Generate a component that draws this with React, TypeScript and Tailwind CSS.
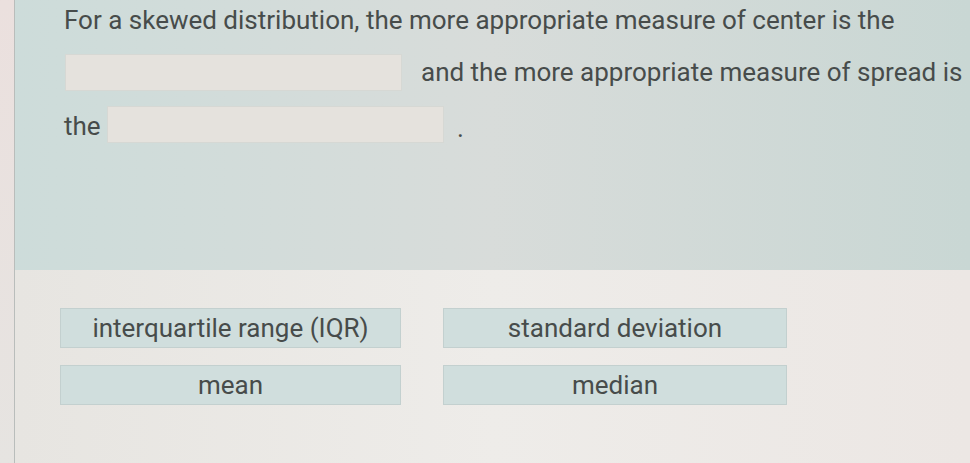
import React from "react";

const choices = [
  "interquartile range (IQR)",
  "standard deviation",
  "mean",
  "median",
];

function Blank({ className = "" }: { className?: string }) {
  return (
    <div
      className={`h-[37px] w-[337px] border border-[#d6d8d4] bg-[#e5e2dd] ${className}`}
    />
  );
}

export default function App() {
  return (
    <div
      className="flex h-[463px] w-[970px] overflow-hidden text-[#474c4b]"
      style={{ fontFamily: "Roboto, 'Liberation Sans', sans-serif" }}
    >
      {/* left margin of the page */}
      <div className="w-[15px] shrink-0 border-r border-[#b9bdbb] bg-gradient-to-b from-[#ebe0de] to-[#e6e4e1]" />

      <div className="flex flex-1 flex-col">
        {/* question */}
        <div className="h-[270px] bg-gradient-to-r from-[#cddcda] via-[#d8dcda] to-[#c9d7d4] pl-[49px] pt-[1px]">
          <div className="flex h-[38px] items-center whitespace-nowrap text-[26px]">
            For a skewed distribution, the more appropriate measure of center is the
          </div>
          <div className="mt-[13px] flex items-center gap-[19px] pl-[1px]">
            <Blank />
            <span className="whitespace-nowrap pt-[1px] text-[26px]">
              and the more appropriate measure of spread is
            </span>
          </div>
          <div className="mt-[9px] flex items-center">
            <span className="w-[43px] pt-[4px] text-[26px]">the</span>
            <Blank />
            <span className="ml-[13px] pt-[8px] text-[26px]">.</span>
          </div>
        </div>

        {/* answer bank */}
        <div className="flex-1 bg-gradient-to-r from-[#e7e5e1] via-[#eeece9] to-[#ece7e4] pl-[45px] pt-[38px]">
          <div className="grid w-[727px] grid-cols-[341px_344px] gap-x-[42px] gap-y-[17px]">
            {choices.map((c) => (
              <div
                key={c}
                className="flex h-[40px] items-center justify-center border border-[#c3d0cf] bg-[#d0dedd] text-[26px]"
              >
                {c}
              </div>
            ))}
          </div>
        </div>
      </div>
    </div>
  );
}
